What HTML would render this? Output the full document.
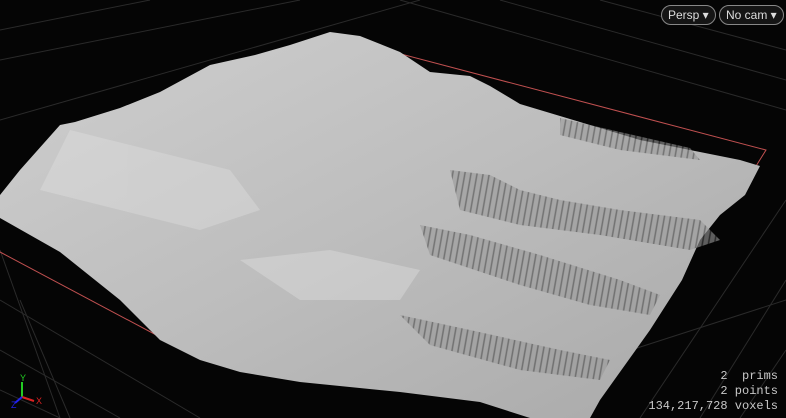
<!DOCTYPE html>
<html><head><style>
html,body{margin:0;padding:0;background:#000;}
#v{position:relative;width:786px;height:418px;overflow:hidden;background:#050505;font-family:"Liberation Sans",sans-serif;}
.btn{position:absolute;top:5px;height:18px;border:1px solid #888;border-radius:10px;color:#ddd;font-size:12px;line-height:18px;padding:0 6px;background:#151515;}
.stats{position:absolute;right:8px;bottom:4px;font-family:"Liberation Mono",monospace;font-size:12px;line-height:15px;color:#c8c8c8;text-align:right;white-space:pre;}
</style></head><body><div id="v">
<svg width="786" height="418" style="position:absolute;left:0;top:0">
<defs>
<linearGradient id="t" x1="0" y1="0" x2="1" y2="1">
<stop offset="0" stop-color="#cfcfcf"/><stop offset="0.5" stop-color="#bdbdbd"/><stop offset="1" stop-color="#a8a8a8"/>
</linearGradient>
<pattern id="s" width="6" height="40" patternUnits="userSpaceOnUse" patternTransform="rotate(10)">
<rect width="6" height="40" fill="#9a9a9a"/><line x1="2" y1="0" x2="2" y2="40" stroke="#444" stroke-width="1.5"/>
</pattern>
</defs>
<g stroke="#2a2a2a" stroke-width="1">
<line x1="0" y1="60" x2="300" y2="0"/><line x1="0" y1="120" x2="420" y2="0"/><line x1="0" y1="30" x2="150" y2="0"/>
<line x1="500" y1="0" x2="786" y2="80"/><line x1="600" y1="0" x2="786" y2="50"/><line x1="400" y1="0" x2="786" y2="110"/>
<line x1="0" y1="300" x2="200" y2="418"/><line x1="0" y1="350" x2="120" y2="418"/><line x1="0" y1="390" x2="60" y2="418"/>
<line x1="786" y1="200" x2="640" y2="418"/><line x1="786" y1="280" x2="700" y2="418"/><line x1="786" y1="350" x2="740" y2="418"/>
<line x1="600" y1="360" x2="786" y2="300"/><line x1="0" y1="250" x2="60" y2="418"/><line x1="70" y1="418" x2="20" y2="300"/>
</g>
<polyline points="0,252 175,345" stroke="#c05050" fill="none"/>
<polyline points="340,38 766,150 735,200" stroke="#c05050" fill="none"/>
<polyline points="600,380 585,418" stroke="#c05050" fill="none"/>
<polygon fill="url(#t)" points="0,195 20,170 60,125 75,122 120,108 160,92 210,65 255,55 290,45 330,32 360,36 400,52 430,72 470,76 490,86 520,104 560,116 600,128 640,140 690,150 740,160 760,166 745,195 720,215 700,240 682,280 650,330 620,372 600,400 590,418 530,418 480,402 400,392 300,382 240,372 200,360 160,340 120,300 60,252 0,218"/>
<g fill="url(#s)" opacity="0.6">
<polygon points="450,170 490,175 520,190 560,200 620,210 700,220 720,240 690,250 600,235 520,225 460,210"/>
<polygon points="420,225 470,235 540,255 620,280 660,295 650,315 590,305 520,285 430,255"/>
<polygon points="400,315 470,330 560,350 610,360 600,380 520,370 430,345"/>
<polygon points="560,118 620,132 690,148 700,160 620,150 560,135"/>
</g>
<g fill="#e0e0e0" opacity="0.4">
<polygon points="70,130 150,150 230,170 260,210 200,230 120,210 40,190"/>
<polygon points="240,260 330,250 420,270 400,300 300,300"/>
</g>
<g stroke-width="2" fill="none">
<line x1="22" y1="397" x2="22" y2="382" stroke="#2c2"/>
<line x1="22" y1="397" x2="34" y2="401" stroke="#d22"/>
<line x1="22" y1="397" x2="15" y2="403" stroke="#22e"/>
</g>
<text x="20" y="381" fill="#2c2" font-size="9" font-family="Liberation Sans">Y</text>
<text x="36" y="404" fill="#d22" font-size="9" font-family="Liberation Sans">X</text>
<text x="11" y="408" fill="#22e" font-size="9" font-family="Liberation Sans">Z</text>
</svg>
<div class="btn" style="left:661px">Persp ▾</div>
<div class="btn" style="left:719px">No cam ▾</div>
<div class="stats">2  prims
2 points
134,217,728 voxels</div>
</div></body></html>
